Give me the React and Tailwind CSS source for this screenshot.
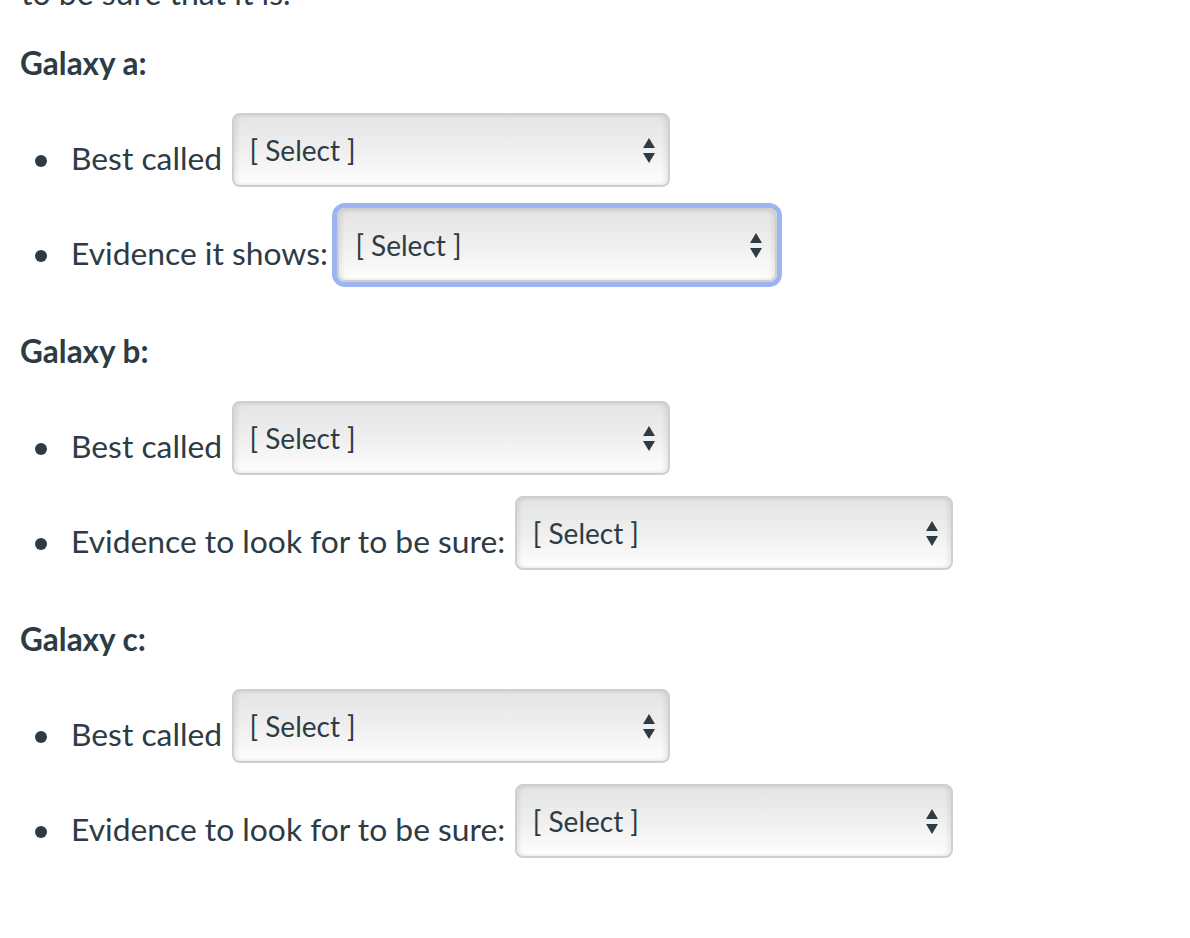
import React from "react";

const sections = [
  {
    title: "Galaxy a:",
    rows: [
      { label: "Best called", width: "w-[438px]" },
      { label: "Evidence it shows:", width: "w-[440px]", focused: true },
    ],
  },
  {
    title: "Galaxy b:",
    rows: [
      { label: "Best called", width: "w-[438px]" },
      { label: "Evidence to look for to be sure:", width: "w-[438px]" },
    ],
  },
  {
    title: "Galaxy c:",
    rows: [
      { label: "Best called", width: "w-[438px]" },
      { label: "Evidence to look for to be sure:", width: "w-[438px]" },
    ],
  },
];

const SelectBox = ({ width, focused }) => (
  <div
    className={`${width} h-[74px] ml-[9.5px] flex items-center justify-between pl-[16px] pr-[13px] rounded-[8px] border-2 border-[#cfcfcf] bg-linear-to-b from-[#e4e4e4] via-[#efefef] to-[#fefefe] text-[28px] text-[#2d3b45] ${
      focused
        ? "shadow-[0_0_0_5px_#9cb5f1,inset_3px_0_4px_rgba(0,0,0,0.07),inset_-3px_0_4px_rgba(0,0,0,0.07)]"
        : "shadow-[inset_3px_0_4px_rgba(0,0,0,0.07),inset_-3px_0_4px_rgba(0,0,0,0.07)]"
    }`}
  >
    <span className="leading-none">[ Select ]</span>
    <svg width="12" height="25" viewBox="0 0 12 25" className="shrink-0">
      <path d="M6 0 L12 10 L0 10 Z" fill="#2d3b45" />
      <path d="M0 15 L12 15 L6 25 Z" fill="#2d3b45" />
    </svg>
  </div>
);

const App = () => {
  return (
    <div
      className="h-[938px] overflow-hidden bg-white text-[#2d3b45]"
      style={{ fontFamily: "Lato, 'Noto Sans', sans-serif" }}
    >
      <div className="pl-[21px]">
        <p className="mt-[-31px] text-[32px] leading-[48px]">to be sure that it is.</p>
      </div>
      <div className="mt-[22px] pl-[20px]">
        {sections.map((sec) => (
          <div key={sec.title} className="mb-[45px]">
            <h3 className="text-[31.5px] leading-[48px] font-bold">{sec.title}</h3>
            <ul className="mt-[26px] flex flex-col gap-[21px]">
              {sec.rows.map((row, i) => (
                <li key={i} className="flex items-start">
                  <span className="mt-[42px] ml-[15px] w-[12px] h-[12px] rounded-full bg-[#2d3b45] shrink-0" />
                  <span className="ml-[24px] mt-[21px] text-[31.8px] leading-[48px] whitespace-nowrap">
                    {row.label}
                  </span>
                  <SelectBox width={row.width} focused={row.focused} />
                </li>
              ))}
            </ul>
          </div>
        ))}
      </div>
    </div>
  );
};

export default App;
